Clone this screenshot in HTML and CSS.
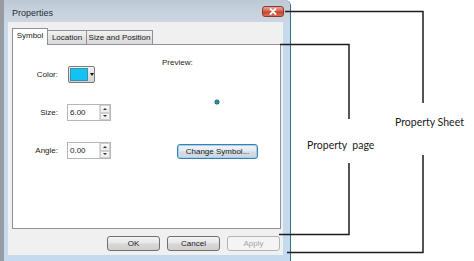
FILE: index.html
```html
<!DOCTYPE html>
<html>
<head>
<meta charset="utf-8">
<link rel="stylesheet" href="styles.css">
</head>
<body>
<div class="page">
  <div class="window">
    <div class="titlebar">
      <span class="title">Properties</span>
      <div class="close">
        <svg width="8" height="7" viewBox="0 0 8 7"><path d="M1.5 1 L6.5 6 M6.5 1 L1.5 6" stroke="#fff" stroke-width="1.8" stroke-linecap="round"/></svg>
      </div>
    </div>
    <div class="client">
      <div class="tabs">
        <div class="tab active">Symbol</div>
        <div class="tab loc">Location</div>
        <div class="tab size">Size and Position</div>
      </div>
      <div class="panel">
        <div class="fields">
          <div class="row">
            <span class="label">Color:</span>
            <div class="colorbtn"><span class="swatch"></span><span class="drop"></span></div>
          </div>
          <div class="row">
            <span class="label">Size:</span>
            <div class="spin"><span class="val">6.00</span><div class="spinbtns"><span class="sb up"></span><span class="sb down"></span></div></div>
          </div>
          <div class="row">
            <span class="label">Angle:</span>
            <div class="spin"><span class="val">0.00</span><div class="spinbtns"><span class="sb up"></span><span class="sb down"></span></div></div>
          </div>
        </div>
        <div class="preview">
          <div class="plabel">Preview:</div>
          <div class="dot"></div>
          <div class="btn default change">Change Symbol...</div>
        </div>
      </div>
      <div class="buttons">
        <div class="btn">OK</div>
        <div class="btn">Cancel</div>
        <div class="btn disabled">Apply</div>
      </div>
    </div>
  </div>
  <svg class="callouts" width="474" height="261" viewBox="0 0 474 261">
    <g fill="none" stroke="#1c1c1c" stroke-width="1.5">
      <polyline points="285,11.5 423,11.5 423,103"/>
      <polyline points="280,44.5 349,44.5 349,119"/>
      <polyline points="349,163 349,234.5 279,234.5"/>
      <polyline points="423,155 423,252.5 287,252.5"/>
    </g>
  </svg>
  <div class="note sheet">Property Sheet</div>
  <div class="note pagelbl">Property&nbsp; page</div>
</div>
</body>
</html>
```
FILE: styles.css
```css
html, body {
  margin: 0;
  padding: 0;
  background: #fff;
}
.page {
  position: relative;
  width: 474px;
  height: 261px;
  overflow: hidden;
  background: #fff;
  font-family: "Liberation Sans", Arial, sans-serif;
  font-size: 8px;
  color: #1a1a1a;
}
.window {
  width: 291px;
  height: 261px;
  box-sizing: border-box;
  display: flex;
  flex-direction: column;
  background: #c6daee;
  border-left: 4px solid #969ca2;
  border-right: 1px solid #2f7486;
  border-top-right-radius: 6px;
  padding-bottom: 6px;
}
.titlebar {
  height: 22px;
  flex: none;
  display: flex;
  align-items: center;
  padding-left: 8px;
  padding-right: 6px;
  padding-top: 4px;
  box-sizing: border-box;
  background: linear-gradient(#bcc8d4, #c9d3de 60%, #ccd6e0);
  border-top-right-radius: 5px;
}
.title {
  flex: 1;
  font-size: 9px;
  color: #1e2a38;
}
.close {
  width: 22px;
  height: 11px;
  margin-top: -3px;
  box-sizing: border-box;
  border: 1px solid #8a3a30;
  border-radius: 3px;
  background: linear-gradient(#e9a596, #d66450 45%, #c9412d 55%, #d9705a);
  display: flex;
  align-items: center;
  justify-content: center;
}
.close svg { display: block; }
.client {
  flex: 1;
  margin-left: 4px;
  margin-right: 7px;
  background: #f0f0f0;
  display: flex;
  flex-direction: column;
  padding: 6px 2px 4px 4px;
  box-sizing: border-box;
}
.tabs {
  display: flex;
  align-items: flex-end;
  height: 16px;
  position: relative;
  z-index: 2;
}
.tab {
  box-sizing: border-box;
  height: 14px;
  border: 1px solid #8f929a;
  border-bottom: none;
  background: linear-gradient(#f2f2f2, #e4e4e4 50%, #d9d9d9);
  display: flex;
  align-items: center;
  justify-content: center;
  line-height: 10px;
  padding-top: 1px;
}
.tab.active {
  width: 36px;
  height: 17px;
  margin-bottom: -1px;
  background: #fff;
  padding-top: 0;
  padding-bottom: 2px;
}
.tab.loc {
  width: 39px;
  border-left: none;
}
.tab.size {
  width: 67px;
  margin-left: -1px;
}
.panel {
  height: 185px;
  box-sizing: border-box;
  border: 1px solid #8f929a;
  background: #fff;
  display: flex;
}
.fields {
  width: 149px;
  display: flex;
  flex-direction: column;
  gap: 21px;
  padding-top: 21px;
}
.row {
  display: flex;
  align-items: center;
  height: 17px;
  gap: 9px;
}
.label {
  width: 45px;
  text-align: right;
}
.colorbtn {
  width: 27px;
  height: 17px;
  margin-left: 1px;
  box-sizing: border-box;
  border: 1px solid #7a7a7a;
  border-radius: 2px;
  background: linear-gradient(#f4f4f4, #e2e2e2 50%, #d2d2d2);
  display: flex;
  align-items: center;
  padding-left: 1px;
}
.swatch {
  width: 18px;
  height: 13px;
  box-sizing: border-box;
  background: #12c2f2;
  border: 1px solid #3f8fb0;
}
.drop {
  margin-left: 2px;
  width: 0;
  height: 0;
  border-left: 2px solid transparent;
  border-right: 2px solid transparent;
  border-top: 3px solid #111;
}
.spin {
  width: 44px;
  height: 17px;
  box-sizing: border-box;
  border: 1px solid #b4b7bd;
  background: #fff;
  display: flex;
  align-items: center;
  padding-left: 2px;
}
.val {
  flex: 1;
}
.spinbtns {
  width: 11px;
  height: 15px;
  display: flex;
  flex-direction: column;
  box-sizing: border-box;
  border-left: 1px solid #d8d8d8;
}
.sb {
  flex: 1;
  box-sizing: border-box;
  border: 1px solid #cfcfcf;
  background: linear-gradient(#fbfbfb, #ececec);
  display: flex;
  align-items: center;
  justify-content: center;
}
.sb::after {
  content: "";
  width: 0;
  height: 0;
  border-left: 2px solid transparent;
  border-right: 2px solid transparent;
}
.sb.up::after { border-bottom: 2px solid #333; }
.sb.down::after { border-top: 2px solid #333; }
.preview {
  display: flex;
  flex-direction: column;
  align-items: flex-start;
  padding-top: 13px;
}
.plabel {
  line-height: 10px;
}
.dot {
  width: 4px;
  height: 4px;
  margin-top: 32px;
  margin-left: 53px;
  border-radius: 50%;
  background: #2e8a9c;
  box-shadow: 0 0 0 0.5px #1d5b68;
}
.btn {
  width: 53px;
  height: 15px;
  box-sizing: border-box;
  border: 1px solid #707070;
  border-radius: 3px;
  background: linear-gradient(#f4f4f4, #e6e6e6 48%, #d8d8d8 52%, #cfcfcf);
  display: flex;
  align-items: center;
  justify-content: center;
  line-height: 10px;
}
.btn.change {
  width: 81px;
  margin-top: 40px;
  margin-left: 15px;
  border-color: #3d7fb2;
  box-shadow: inset 0 0 0 1px #9fd2f0;
  background: linear-gradient(#f0f4f7, #e3eaf0 48%, #d5dde4 52%, #cdd6de);
}
.btn.disabled {
  border-color: #b2b5b8;
  background: #f4f4f4;
  color: #a3a3a3;
}
.buttons {
  margin-top: 7px;
  display: flex;
  justify-content: flex-end;
  gap: 7px;
  padding-right: 1px;
}
.callouts {
  position: absolute;
  left: 0;
  top: 0;
  pointer-events: none;
}
.note {
  position: absolute;
  font-family: Lato, "Open Sans", sans-serif;
  font-size: 10.5px;
  line-height: 12px;
  color: #1a1a1a;
  white-space: nowrap;
}
.note.sheet {
  left: 395px;
  top: 116px;
}
.note.pagelbl {
  left: 307px;
  top: 139px;
}
```
